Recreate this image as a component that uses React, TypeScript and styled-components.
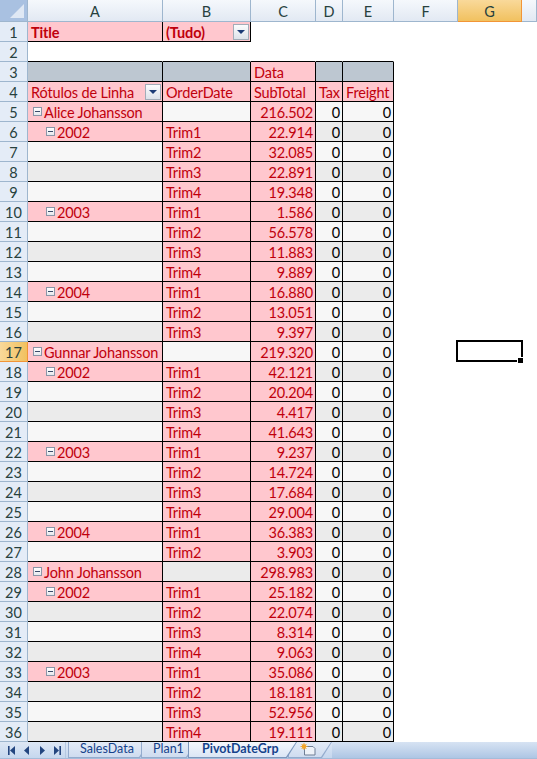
import styled, { createGlobalStyle } from "styled-components";

const GlobalStyle = createGlobalStyle`
  html, body {
    margin: 0;
    padding: 0;
    background: #ffffff;
    overflow: hidden;
  }
  body {
    font-family: Lato, "Liberation Sans", sans-serif;
    font-size: 14.5px;
  }
`;

const COLS = "28px 135px 88px 65px 27px 51px 64px 64px 1fr";

type Fill = "pink" | "light" | "gray" | "blue" | "white";

const fills: Record<Fill, string> = {
  pink: "#ffc7ce",
  light: "#f7f7f7",
  gray: "#ebebeb",
  blue: "#bdc7d1",
  white: "#ffffff",
};

type DataRow = {
  label?: string;
  level?: 0 | 1;
  trim?: string;
  value: string;
};

const data: DataRow[] = [
  { label: "Alice Johansson", level: 0, value: "216.502" },
  { label: "2002", level: 1, trim: "Trim1", value: "22.914" },
  { trim: "Trim2", value: "32.085" },
  { trim: "Trim3", value: "22.891" },
  { trim: "Trim4", value: "19.348" },
  { label: "2003", level: 1, trim: "Trim1", value: "1.586" },
  { trim: "Trim2", value: "56.578" },
  { trim: "Trim3", value: "11.883" },
  { trim: "Trim4", value: "9.889" },
  { label: "2004", level: 1, trim: "Trim1", value: "16.880" },
  { trim: "Trim2", value: "13.051" },
  { trim: "Trim3", value: "9.397" },
  { label: "Gunnar Johansson", level: 0, value: "219.320" },
  { label: "2002", level: 1, trim: "Trim1", value: "42.121" },
  { trim: "Trim2", value: "20.204" },
  { trim: "Trim3", value: "4.417" },
  { trim: "Trim4", value: "41.643" },
  { label: "2003", level: 1, trim: "Trim1", value: "9.237" },
  { trim: "Trim2", value: "14.724" },
  { trim: "Trim3", value: "17.684" },
  { trim: "Trim4", value: "29.004" },
  { label: "2004", level: 1, trim: "Trim1", value: "36.383" },
  { trim: "Trim2", value: "3.903" },
  { label: "John Johansson", level: 0, value: "298.983" },
  { label: "2002", level: 1, trim: "Trim1", value: "25.182" },
  { trim: "Trim2", value: "22.074" },
  { trim: "Trim3", value: "8.314" },
  { trim: "Trim4", value: "9.063" },
  { label: "2003", level: 1, trim: "Trim1", value: "35.086" },
  { trim: "Trim2", value: "18.181" },
  { trim: "Trim3", value: "52.956" },
  { trim: "Trim4", value: "19.111" },
];

const letters = ["A", "B", "C", "D", "E", "F", "G", ""];
const SELECTED_ROW = 17;
const SELECTED_COL = "G";

const App = () => {
  return (
    <>
      <GlobalStyle />
      <Sheet>
        <Grid>
          <HeaderRow>
            <Corner>
              <CornerTriangle />
            </Corner>
            {letters.map((l, i) => (
              <ColHeader key={i} $active={l === SELECTED_COL}>
                {l}
              </ColHeader>
            ))}
          </HeaderRow>

          <Row>
            <RowNum>1</RowNum>
            <Cell $fill="pink" $edge $red $bold>
              Title
            </Cell>
            <Cell $fill="pink" $edge $red $bold $split>
              (Tudo)
              <DropButton>
                <DropArrow />
              </DropButton>
            </Cell>
            <Blank n={6} />
          </Row>

          <Row>
            <RowNum>2</RowNum>
            <Cell $under />
            <Cell $under />
            <Cell $under />
            <Cell $under />
            <Cell $under />
            <Blank n={3} />
          </Row>

          <Row>
            <RowNum>3</RowNum>
            <Cell $fill="blue" $edge />
            <Cell $fill="blue" $edge />
            <Cell $fill="pink" $edge $red>
              Data
            </Cell>
            <Cell $fill="blue" $edge />
            <Cell $fill="blue" $edge />
            <Blank n={3} />
          </Row>

          <Row>
            <RowNum>4</RowNum>
            <Cell $fill="pink" $edge $red $split>
              Rótulos de Linha
              <DropButton>
                <DropArrow />
              </DropButton>
            </Cell>
            <Cell $fill="pink" $edge $red>
              OrderDate
            </Cell>
            <Cell $fill="pink" $edge $red>
              SubTotal
            </Cell>
            <Cell $fill="pink" $edge $red>
              Tax
            </Cell>
            <Cell $fill="pink" $edge $red>
              Freight
            </Cell>
            <Blank n={3} />
          </Row>

          {data.map((d, i) => {
            const r = i + 5;
            const band: Fill = r % 2 === 1 ? "light" : "gray";
            return (
              <Row key={r}>
                <RowNum $active={r === SELECTED_ROW}>{r}</RowNum>
                <Cell $fill={d.label ? "pink" : band} $edge $red>
                  {d.label && (
                    <Label $level={d.level ?? 0}>
                      <Toggle />
                      {d.label}
                    </Label>
                  )}
                </Cell>
                <Cell $fill={d.trim ? "pink" : band} $edge $red>
                  {d.trim}
                </Cell>
                <Cell $fill="pink" $edge $red $right>
                  {d.value}
                </Cell>
                <Cell $fill={band} $edge $right>
                  0
                </Cell>
                <Cell $fill={band} $edge $right>
                  0
                </Cell>
                <Cell />
                <Cell $selected={r === SELECTED_ROW} />
                <Cell />
              </Row>
            );
          })}
        </Grid>

        <TabBar>
          <NavArea>
            <NavButton>
              <svg width="8" height="9" viewBox="0 0 8 9">
                <rect x="0" y="0" width="1.6" height="9" fill="#23457f" />
                <path d="M7 0 L2 4.5 L7 9 Z" fill="#23457f" />
              </svg>
            </NavButton>
            <NavButton>
              <svg width="6" height="9" viewBox="0 0 6 9">
                <path d="M5 0 L0 4.5 L5 9 Z" fill="#23457f" />
              </svg>
            </NavButton>
            <NavButton>
              <svg width="6" height="9" viewBox="0 0 6 9">
                <path d="M1 0 L6 4.5 L1 9 Z" fill="#23457f" />
              </svg>
            </NavButton>
            <NavButton>
              <svg width="8" height="9" viewBox="0 0 8 9">
                <path d="M1 0 L6 4.5 L1 9 Z" fill="#23457f" />
                <rect x="6.4" y="0" width="1.6" height="9" fill="#23457f" />
              </svg>
            </NavButton>
          </NavArea>
          <Tabs>
            <TabShape $w={82}>
              <TabFace>SalesData</TabFace>
            </TabShape>
            <TabShape $w={56}>
              <TabFace>Plan1</TabFace>
            </TabShape>
            <TabShape $w={109} $active>
              <TabFace $active>PivotDateGrp</TabFace>
            </TabShape>
            <TabShape $w={44}>
              <TabFace>
                <svg width="16" height="13" viewBox="0 0 16 13">
                  <path
                    d="M4.5 3.5 h8.5 l2 2 v6.5 h-10.5 z"
                    fill="#eef2f8"
                    stroke="#6f7f96"
                    strokeWidth="1"
                  />
                  <circle cx="4" cy="3.5" r="2.2" fill="#f2a52a" />
                  <path
                    d="M4 0 v7 M0.5 3.5 h7 M1.5 1 l5 5 M6.5 1 l-5 5"
                    stroke="#f2a52a"
                    strokeWidth="0.9"
                  />
                </svg>
              </TabFace>
            </TabShape>
          </Tabs>
          <ScrollArea />
        </TabBar>
      </Sheet>
    </>
  );
};

const Blank = ({ n }: { n: number }) => (
  <>
    {Array.from({ length: n }).map((_, i) => (
      <Cell key={i} />
    ))}
  </>
);

export default App;

const Sheet = styled.div`
  width: 537px;
  height: 759px;
  display: flex;
  flex-direction: column;
  overflow: hidden;
  color: #000;
`;

const Grid = styled.div`
  flex: 1;
  overflow: hidden;
`;

const Row = styled.div`
  display: grid;
  grid-template-columns: ${COLS};
  height: 20px;
`;

const HeaderRow = styled(Row)`
  height: 22px;
`;

const Corner = styled.div`
  box-sizing: border-box;
  position: relative;
  background: #a9c1e1;
  border-right: 1px solid #9eb6ce;
  border-bottom: 1px solid #9eb6ce;
  overflow: hidden;
`;

const CornerTriangle = styled.div`
  position: absolute;
  right: 3px;
  bottom: 3px;
  width: 0;
  height: 0;
  border-left: 14px solid transparent;
  border-bottom: 14px solid #dfe8f4;
`;

const ColHeader = styled.div<{ $active?: boolean }>`
  box-sizing: border-box;
  display: flex;
  align-items: center;
  justify-content: center;
  background: ${(p) =>
    p.$active
      ? "linear-gradient(#f9d99a, #f1c15f)"
      : "linear-gradient(#f5f8fc, #e2e9f3)"};
  border-right: 1px solid ${(p) => (p.$active ? "#f29536" : "#9eb6ce")};
  border-bottom: 1px solid ${(p) => (p.$active ? "#f29536" : "#9eb6ce")};
  color: #27413e;
  padding-top: 1px;
`;

const RowNum = styled.div<{ $active?: boolean }>`
  box-sizing: border-box;
  display: flex;
  align-items: center;
  justify-content: center;
  background: ${(p) =>
    p.$active ? "linear-gradient(90deg, #f9d99a, #f1c15f)" : "#e4ecf7"};
  border-right: 1px solid ${(p) => (p.$active ? "#f29536" : "#9eb6ce")};
  border-bottom: 1px solid ${(p) => (p.$active ? "#f29536" : "#9eb6ce")};
  color: #27413e;
  padding-top: 2px;
`;

const Cell = styled.div<{
  $fill?: Fill;
  $edge?: boolean;
  $under?: boolean;
  $right?: boolean;
  $bold?: boolean;
  $red?: boolean;
  $split?: boolean;
  $selected?: boolean;
}>`
  box-sizing: border-box;
  position: relative;
  display: flex;
  align-items: center;
  justify-content: ${(p) =>
    p.$split ? "space-between" : p.$right ? "flex-end" : "flex-start"};
  padding: ${(p) => (p.$split ? "2px 0 0 3px" : "2px 2px 0 3px")};
  background: ${(p) => fills[p.$fill ?? "white"]};
  border-right: 1px solid ${(p) => (p.$edge ? "#000" : "transparent")};
  border-bottom: 1px solid
    ${(p) => (p.$edge || p.$under ? "#000" : "transparent")};
  color: ${(p) => (p.$red ? "#c0000c" : "#000")};
  font-weight: ${(p) => (p.$bold ? 700 : 400)};
  letter-spacing: -0.15px;
  white-space: nowrap;
  overflow: ${(p) => (p.$selected ? "visible" : "hidden")};

  ${(p) =>
    p.$selected &&
    `
    &::after {
      content: "";
      position: absolute;
      left: -2px;
      top: -2px;
      right: -2px;
      bottom: -1px;
      border: 2px solid #000;
      z-index: 2;
    }
    &::before {
      content: "";
      position: absolute;
      right: -3px;
      bottom: -3px;
      width: 5px;
      height: 5px;
      background: #000;
      border: 1px solid #fff;
      z-index: 3;
    }
  `}
`;

const Label = styled.span<{ $level: number }>`
  display: flex;
  align-items: center;
  padding-left: ${(p) => 2 + p.$level * 13}px;
`;

const Toggle = styled.span`
  box-sizing: border-box;
  position: relative;
  flex: none;
  width: 9px;
  height: 9px;
  margin-right: 2px;
  margin-top: -2px;
  border: 1px solid #8b96a8;
  background: linear-gradient(#ffffff, #e6e9ee);

  &::after {
    content: "";
    position: absolute;
    left: 1px;
    right: 1px;
    top: 3px;
    height: 1px;
    background: #3b4c6b;
  }
`;

const DropButton = styled.span`
  box-sizing: border-box;
  flex: none;
  width: 16px;
  height: 16px;
  margin-right: 1px;
  margin-top: -2px;
  display: flex;
  align-items: center;
  justify-content: center;
  border: 1px solid #a3acb8;
  background: linear-gradient(#fbfcfd, #dde2ea);
`;

const DropArrow = styled.span`
  width: 0;
  height: 0;
  border-left: 4px solid transparent;
  border-right: 4px solid transparent;
  border-top: 4px solid #1d3b76;
  margin-top: 1px;
`;

const TabBar = styled.div`
  height: 17px;
  display: flex;
  background: linear-gradient(#dde7f5, #c5d7ee);
  border-bottom: 1px solid #a5bcd9;
  box-sizing: border-box;
`;

const NavArea = styled.div`
  width: 66px;
  display: flex;
  align-items: center;
  padding-left: 8px;
  gap: 7px;
  box-sizing: border-box;
  border-right: 1px solid #b5c8e2;
`;

const NavButton = styled.span`
  width: 8px;
  display: flex;
  align-items: center;
  justify-content: center;
`;

const Tabs = styled.div`
  display: flex;
  align-items: stretch;
  padding-left: 2px;
`;

const TabShape = styled.div<{ $w: number; $active?: boolean }>`
  width: ${(p) => p.$w}px;
  margin-right: -9px;
  padding: 0 1px 1px 1px;
  background: ${(p) => (p.$active ? "#7c97bd" : "#94acce")};
  clip-path: polygon(0 0, 100% 0, calc(100% - 10px) 100%, 0 100%);
  position: relative;
  z-index: ${(p) => (p.$active ? 3 : 1)};
  box-sizing: border-box;
`;

const TabFace = styled.div<{ $active?: boolean }>`
  height: 100%;
  display: flex;
  align-items: center;
  padding-left: ${(p) => (p.$active ? 13 : 11)}px;
  background: ${(p) =>
    p.$active
      ? "linear-gradient(#f4f7fc, #dbe6f5)"
      : "linear-gradient(#e3ebf7, #cfdcef)"};
  clip-path: polygon(0 0, 100% 0, calc(100% - 10px) 100%, 0 100%);
  color: #15428b;
  font-size: 12.5px;
  font-weight: ${(p) => (p.$active ? 700 : 400)};
  line-height: 1;
  white-space: nowrap;
`;

const ScrollArea = styled.div`
  flex: 1;
  margin-left: 9px;
  background: linear-gradient(#d7e3f3, #aec6e4);
`;
